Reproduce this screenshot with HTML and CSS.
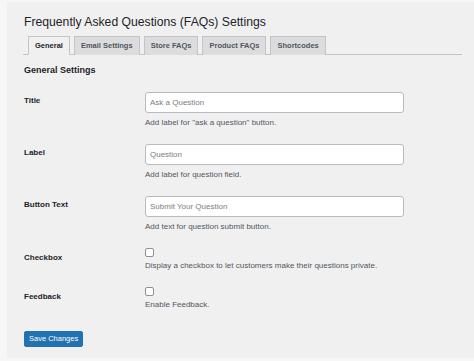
FILE: index.html
```html
<!DOCTYPE html>
<html lang="en">
<head>
    <meta charset="UTF-8">
    <title>FAQs Settings</title>
    <link rel="stylesheet" href="styles.css">
</head>
<body>
    <div class="wrap">
        <h1>Frequently Asked Questions (FAQs) Settings</h1>

        <!-- tabs -->
        <nav class="nav-tabs">
            <a class="tab active">General</a>
            <a class="tab">Email Settings</a>
            <a class="tab">Store FAQs</a>
            <a class="tab">Product FAQs</a>
            <a class="tab">Shortcodes</a>
        </nav>

        <h2>General Settings</h2>

        <form class="form-table">
            <div class="row">
                <label class="row-label">Title</label>
                <div class="row-field">
                    <input type="text" placeholder="Ask a Question">
                    <p class="desc">Add label for "ask a question" button.</p>
                </div>
            </div>
            <div class="row">
                <label class="row-label">Label</label>
                <div class="row-field">
                    <input type="text" placeholder="Question">
                    <p class="desc">Add label for question field.</p>
                </div>
            </div>
            <div class="row">
                <label class="row-label">Button Text</label>
                <div class="row-field">
                    <input type="text" placeholder="Submit Your Question">
                    <p class="desc">Add text for question submit button.</p>
                </div>
            </div>
            <div class="row row-check">
                <label class="row-label">Checkbox</label>
                <div class="row-field">
                    <span class="check"></span>
                    <p class="desc">Display a checkbox to let customers make their questions private.</p>
                </div>
            </div>
            <div class="row row-check">
                <label class="row-label">Feedback</label>
                <div class="row-field">
                    <span class="check"></span>
                    <p class="desc">Enable Feedback.</p>
                </div>
            </div>

            <button type="button" class="button-primary">Save Changes</button>
        </form>
    </div>
</body>
</html>
```

FILE: styles.css
```css
/* settings page, scaled down wp-admin look */
body {
    margin: 0;
    background: #f7f7f7;
    font-family: "Liberation Sans", Arial, sans-serif;
    color: #1d2327;
}
.wrap {
    background: #f0f0f1;
    margin: 2px 0 0 7px;
    height: 356px;
    padding: 12px 12px 0 16px;
    box-sizing: border-box;
}
h1 {
    font-size: 12.2px;
    font-weight: 400;
    line-height: 16px;
    margin: 0 0 0 1px;
}
.nav-tabs {
    display: flex;
    gap: 4px;
    margin-top: 6px;
    padding-left: 5px;
    border-bottom: 1px solid #c3c4c7;
}
.tab {
    font-size: 7.5px;
    font-weight: 700;
    line-height: 17px;
    padding: 0 6px;
    background: #dcdcde;
    border: 1px solid #c3c4c7;
    border-bottom: none;
    color: #50575e;
    margin-bottom: -1px;
}
.tab.active {
    background: #f0f0f1;
    color: #1d2327;
    border-bottom: 1px solid #f0f0f1;
}
h2 {
    font-size: 9px;
    font-weight: 700;
    line-height: 12px;
    margin: 9px 0 0 1px;
}
.form-table {
    margin-top: 8px;
}
.row {
    display: grid;
    grid-template-columns: 121px 259px;
    padding: 8px 0 8px 1px;
}
.row-label {
    font-size: 8px;
    font-weight: 700;
    line-height: 11px;
    padding-top: 3px;
}
.row-field input {
    display: block;
    box-sizing: border-box;
    width: 259px;
    height: 21px;
    border: 1px solid #b9bbbf;
    border-radius: 3px;
    background: #fff;
    padding: 0 4px;
    font-family: inherit;
    font-size: 8px;
    color: #2c3338;
}
.row-field input::placeholder {
    color: #7a7e83;
}
.desc {
    margin: 4px 0 0;
    font-size: 8px;
    line-height: 11px;
    color: #50575e;
}
.row-check .row-label {
    padding-top: 4px;
}
.check {
    display: block;
    width: 9px;
    height: 9px;
    border: 1px solid #8c8f94;
    border-radius: 2px;
    background: #fff;
    box-sizing: border-box;
}
.row-check .desc {
    margin-top: 3px;
}
.button-primary {
    display: block;
    margin: 13px 0 0 1px;
    background: #2271b1;
    border: 1px solid #2271b1;
    border-radius: 2px;
    color: #fff;
    font-family: inherit;
    font-size: 7.5px;
    line-height: 14px;
    padding: 0 4px;
    white-space: nowrap;
}
```
